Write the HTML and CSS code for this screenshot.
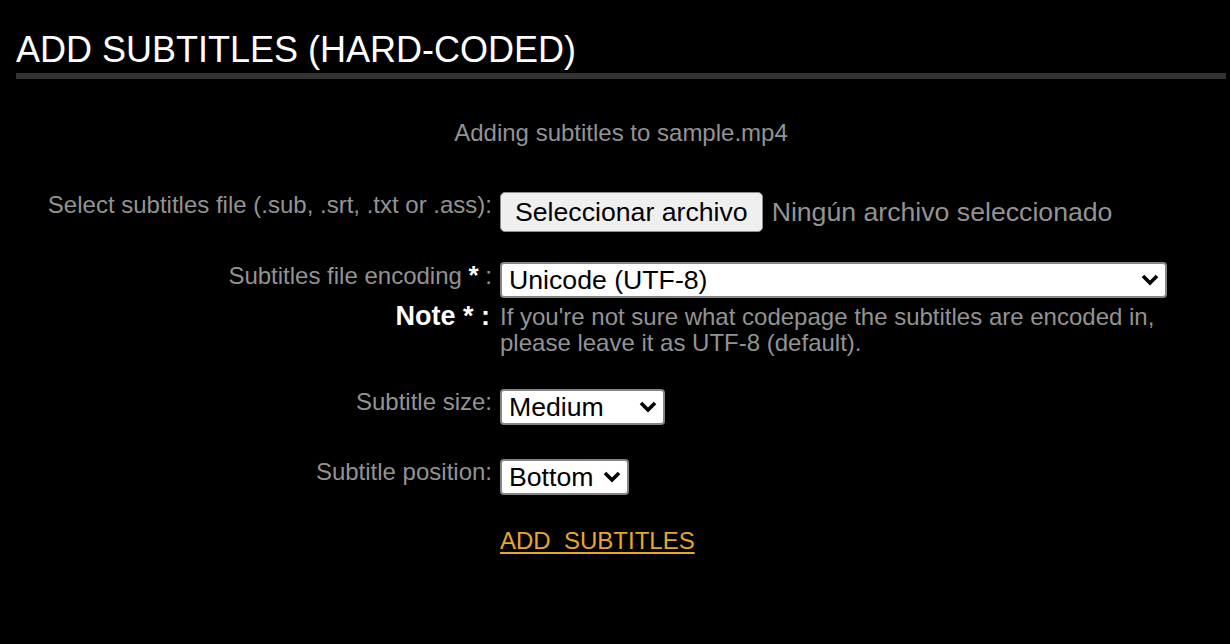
FILE: index.html
```html
<!DOCTYPE html>
<html lang="en">
<head>
<meta charset="utf-8">
<title>Add subtitles (hard-coded)</title>
<link rel="stylesheet" href="styles.css">
</head>
<body>
<div class="page">
  <h1 class="title">ADD SUBTITLES (HARD-CODED)</h1>
  <p class="intro">Adding subtitles to sample.mp4</p>
  <form class="form">
    <div class="row row-file">
      <label class="label">Select subtitles file (.sub, .srt, .txt or .ass):</label>
      <div class="field field-file">
        <button type="button" class="btn">Seleccionar archivo</button>
        <span class="nofile">Ningún archivo seleccionado</span>
      </div>
    </div>
    <div class="row row-enc">
      <label class="label">Subtitles file encoding <span class="star">*</span> :</label>
      <div class="field">
        <span class="select-wrap">
          <select class="select select-enc">
            <option>Unicode (UTF-8)</option>
            <option>Western (Windows-1252)</option>
            <option>Central European (Windows-1250)</option>
            <option>Cyrillic (Windows-1251)</option>
          </select>
          <svg class="chev" viewBox="0 0 18 12" width="18" height="12" aria-hidden="true"><polyline points="2,2 9,9 16,2" fill="none" stroke="#000" stroke-width="3.6"/></svg>
        </span>
      </div>
    </div>
    <div class="row row-note">
      <span class="note-label">Note * :</span>
      <p class="note-text">If you're not sure what codepage the subtitles are encoded in, please leave it as UTF-8 (default).</p>
    </div>
    <div class="row row-size">
      <label class="label">Subtitle size:</label>
      <div class="field">
        <span class="select-wrap">
          <select class="select select-size">
            <option>Small</option>
            <option selected>Medium</option>
            <option>Large</option>
          </select>
          <svg class="chev" viewBox="0 0 18 12" width="18" height="12" aria-hidden="true"><polyline points="2,2 9,9 16,2" fill="none" stroke="#000" stroke-width="3.6"/></svg>
        </span>
      </div>
    </div>
    <div class="row row-pos">
      <label class="label">Subtitle position:</label>
      <div class="field">
        <span class="select-wrap">
          <select class="select select-pos">
            <option>Top</option>
            <option>Middle</option>
            <option selected>Bottom</option>
          </select>
          <svg class="chev" viewBox="0 0 18 12" width="18" height="12" aria-hidden="true"><polyline points="2,2 9,9 16,2" fill="none" stroke="#000" stroke-width="3.6"/></svg>
        </span>
      </div>
    </div>
    <div class="row row-submit">
      <span class="spacer"></span>
      <div class="field"><a class="submit" href="#">ADD_SUBTITLES</a></div>
    </div>
  </form>
</div>
</body>
</html>
```

FILE: styles.css
```css
html, body {
  margin: 0;
  padding: 0;
  background: #000;
}

body {
  font-family: "Liberation Sans", Arial, Helvetica, sans-serif;
  color: #939393;
}

.page {
  padding: 0 4px 0 16px;
}

.title {
  margin: 28px 0 0;
  padding: 0 0 2px;
  font-size: 36px;
  line-height: 43px;
  font-weight: normal;
  color: #fff;
  border-bottom: 6px solid #333;
}

.intro {
  margin: 40px 0 0;
  font-size: 24px;
  line-height: 28px;
  text-align: center;
  color: #939393;
}

.form {
  margin: 0;
}

.row {
  display: grid;
  grid-template-columns: 484px 1fr;
  align-items: start;
}

.row-file { margin-top: 45px; }
.row-enc { margin-top: 30px; }
.row-note { margin-top: 5px; align-items: baseline; }
.row-size { margin-top: 33px; }
.row-pos { margin-top: 34px; }
.row-submit { margin-top: 32px; }

.label {
  margin-top: -1px;
  padding-right: 8px;
  text-align: right;
  font-size: 24px;
  line-height: 28px;
  color: #939393;
}

.star {
  color: #fff;
  font-weight: bold;
  font-size: 26px;
}

.field {
  display: flex;
  align-items: center;
}

.btn {
  box-sizing: border-box;
  height: 40px;
  margin: 0;
  padding: 0 14px;
  font-family: "Liberation Sans", Arial, sans-serif;
  font-size: 26.67px;
  line-height: 30px;
  color: #000;
  background: #efefef;
  border: 1px solid #8f8f8f;
  border-radius: 5px;
}

.nofile {
  margin-left: 9px;
  font-size: 26.67px;
  color: #939393;
}

.select-wrap {
  position: relative;
  display: inline-block;
}

.select {
  -webkit-appearance: none;
  appearance: none;
  box-sizing: border-box;
  display: block;
  height: 36px;
  margin: 0;
  padding: 0 30px 1px 7px;
  font-family: "Liberation Sans", Arial, sans-serif;
  font-size: 26.67px;
  color: #000;
  background: #fff;
  border: 2px solid #858585;
  border-radius: 4px;
}

.select-enc { width: 667px; }
.select-size { width: 165px; }
.select-pos { width: 129px; }

.chev {
  position: absolute;
  right: 8px;
  top: 50%;
  margin-top: -6px;
  pointer-events: none;
}

.note-label {
  padding-right: 10px;
  text-align: right;
  font-size: 27px;
  line-height: 26px;
  font-weight: bold;
  color: #fff;
}

.note-text {
  margin: 0;
  max-width: 680px;
  font-size: 24px;
  line-height: 26px;
  color: #939393;
}

.submit {
  font-size: 24px;
  line-height: 28px;
  color: #e6a72b;
  text-decoration: underline;
  text-decoration-thickness: 2px;
  text-underline-offset: 3px;
}
```
